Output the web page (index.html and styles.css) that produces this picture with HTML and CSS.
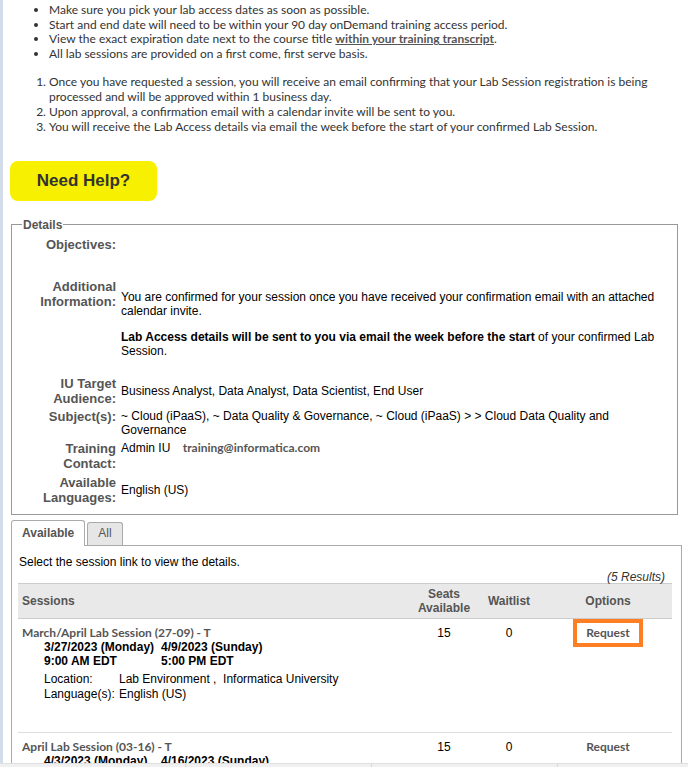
FILE: index.html
```html
<!DOCTYPE html>
<html lang="en">
<head>
  <meta charset="UTF-8">
  <title>Lab Session Registration</title>
  <link rel="stylesheet" href="styles.css">
</head>
<body>
<div class="page">

  <ul class="notes">
    <li>Make sure you pick your lab access dates as soon as possible.</li>
    <li>Start and end date will need to be within your 90 day onDemand training access period.</li>
    <li>View the exact expiration date next to the course title <a href="#" class="transcript">within your training transcript</a>.</li>
    <li>All lab sessions are provided on a first come, first serve basis.</li>
  </ul>

  <ol class="notes steps">
    <li>Once you have requested a session, you will receive an email confirming that your Lab Session registration is being processed and will be approved within 1 business day.</li>
    <li>Upon approval, a confirmation email with a calendar invite will be sent to you.</li>
    <li>You will receive the Lab Access details via email the week before the start of your confirmed Lab Session.</li>
  </ol>

  <a href="#" class="help-btn">Need Help?</a>

  <fieldset class="details">
    <legend>Details</legend>
    <div class="detail-grid">
      <div class="lbl row-obj">Objectives:</div>
      <div class="val row-obj"></div>

      <div class="lbl row-info">Additional Information:</div>
      <div class="val row-info">
        <p>You are confirmed for your session once you have received your confirmation email with an attached calendar invite.</p>
        <p><b>Lab Access details will be sent to you via email the week before the start</b> of your confirmed Lab Session.</p>
      </div>

      <div class="lbl row-aud">IU Target Audience:</div>
      <div class="val row-aud mid">Business Analyst, Data Analyst, Data Scientist, End User</div>

      <div class="lbl row-subj">Subject(s):</div>
      <div class="val row-subj">~ Cloud (iPaaS), ~ Data Quality &amp; Governance, ~ Cloud (iPaaS) &gt; &gt; Cloud Data Quality and Governance</div>

      <div class="lbl row-contact">Training Contact:</div>
      <div class="val row-contact">Admin IU <span class="mail">training@informatica.com</span></div>

      <div class="lbl row-lang">Available Languages:</div>
      <div class="val row-lang mid">English (US)</div>
    </div>
  </fieldset>

  <div class="tabs">
    <span class="tab active">Available</span>
    <span class="tab">All</span>
  </div>

  <div class="tab-panel">
    <p class="hint">Select the session link to view the details.</p>
    <div class="results">(5 Results)</div>

    <table class="sessions">
      <thead>
        <tr>
          <th class="col-name">Sessions</th>
          <th class="col-seats">Seats Available</th>
          <th class="col-wait">Waitlist</th>
          <th class="col-opt">Options</th>
        </tr>
      </thead>
      <tbody>
        <tr>
          <td class="col-name">
            <a href="#" class="session-title">March/April Lab Session (27-09) - T</a>
            <div class="dates">
              <span>3/27/2023 (Monday)</span><span>4/9/2023 (Sunday)</span>
              <span>9:00 AM EDT</span><span>5:00 PM EDT</span>
            </div>
            <div class="meta">
              <span>Location:</span><span>Lab Environment ,&nbsp; Informatica University</span>
              <span>Language(s):</span><span>English (US)</span>
            </div>
          </td>
          <td class="col-seats">15</td>
          <td class="col-wait">0</td>
          <td class="col-opt"><a href="#" class="request marked">Request</a></td>
        </tr>
        <tr>
          <td class="col-name">
            <a href="#" class="session-title">April Lab Session (03-16) - T</a>
            <div class="dates">
              <span>4/3/2023 (Monday)</span><span>4/16/2023 (Sunday)</span>
              <span>9:00 AM EDT</span><span>5:00 PM EDT</span>
            </div>
          </td>
          <td class="col-seats">15</td>
          <td class="col-wait">0</td>
          <td class="col-opt"><a href="#" class="request">Request</a></td>
        </tr>
      </tbody>
    </table>
  </div>

</div>

<div class="status-bar">
  <span></span><span></span><span></span>
</div>
</body>
</html>
```

FILE: styles.css
```css
body {
  margin: 0;
  font-family: Arial, "Liberation Sans", sans-serif;
  font-size: 12px;
  color: #000;
  background: #fff;
}

.page {
  border-left: 3px solid #d3dcea;
  padding: 3px 6px 40px 7px;
  min-height: 767px;
  box-sizing: border-box;
}

a {
  text-decoration: none;
}

/* intro notes */
.notes {
  font-family: Lato, "Open Sans", sans-serif;
  font-size: 12px;
  line-height: 14.7px;
  color: #333;
  margin: 0;
  padding-left: 39px;
}

.steps {
  margin-top: 12px;
  line-height: 15px;
}

.transcript {
  color: #555;
  font-weight: bold;
  text-decoration: underline;
}

.help-btn {
  display: flex;
  align-items: center;
  justify-content: center;
  width: 147px;
  height: 40px;
  margin-top: 27px;
  background: #f7f000;
  border-radius: 8px;
  color: #333;
  font-weight: bold;
  font-size: 17px;
}

/* details box */
.details {
  margin: 17px 4px 0 1px;
  padding: 0 12px 9px 0;
  border: 1px solid #999;
}

.details legend {
  margin-left: 10px;
  padding: 0 1px;
  font-weight: bold;
  font-size: 12px;
  color: #555;
}

.detail-grid {
  display: grid;
  grid-template-columns: 104px 1fr;
  column-gap: 5px;
  align-items: start;
}

.lbl {
  text-align: right;
  font-weight: bold;
  font-size: 13px;
  line-height: 15px;
  color: #555;
}

.val {
  line-height: 14px;
}

.val p {
  margin: 0 0 12px;
}

.val p:last-child {
  margin-bottom: 0;
}

.mid {
  align-self: center;
}

.row-obj { margin-top: 5px; min-height: 38px; }
.lbl.row-info { margin-top: 4px; }
.val.row-info { margin-top: 15px; }
.row-aud { margin-top: 18px; }
.row-subj { margin-top: 3px; }
.row-contact { margin-top: 4px; }
.row-lang { margin-top: 4px; }

.mail {
  font-family: Lato, "Open Sans", sans-serif;
  font-weight: bold;
  color: #555;
  margin-left: 9px;
}

/* tabs */
.tabs {
  display: flex;
  align-items: flex-end;
  gap: 2px;
  margin: 6px 0 0 1px;
  height: 24px;
}

.tab {
  border: 1px solid #aaa;
  border-bottom: none;
  border-radius: 3px 3px 0 0;
  padding: 0 10px;
  height: 22px;
  line-height: 21px;
  font-size: 12px;
  color: #555;
  background: #e6e6e6;
}

.tab.active {
  height: 25px;
  line-height: 24px;
  background: #fff;
  font-weight: bold;
  margin-bottom: -1px;
  position: relative;
}

.tab-panel {
  border: 1px solid #aaa;
  border-bottom: none;
  margin-left: 1px;
  padding: 9px 9px 0 6px;
}

.hint {
  margin: 0 0 0 1px;
  line-height: 14px;
}

.results {
  text-align: right;
  font-style: italic;
  color: #333;
  padding-right: 7px;
  margin-top: 1px;
  line-height: 14px;
}

/* sessions table */
.sessions {
  width: 100%;
  border-collapse: collapse;
  margin-top: -1px;
}

.sessions th {
  background: #e9e9e9;
  border-top: 1px solid #ccc;
  border-bottom: 1px solid #ccc;
  color: #555;
  font-size: 12px;
  line-height: 14px;
  height: 34px;
  padding: 0;
}

.sessions th.col-name {
  text-align: left;
  padding-left: 4px;
}

.col-seats { width: 60px; text-align: center; }
.col-wait { width: 70px; text-align: center; }
.col-opt { width: 128px; text-align: center; }

.sessions td {
  vertical-align: top;
  padding: 7px 0 0;
  line-height: 14px;
  border-bottom: 1px solid #ddd;
}

.sessions tbody tr:first-child td {
  height: 106px;
}

.sessions td.col-name {
  padding-left: 4px;
}

.session-title,
.request {
  font-family: Lato, "Open Sans", sans-serif;
  font-weight: bold;
  color: #555;
}

.request {
  display: inline-block;
}

.request.marked {
  outline: 4px solid #fd7e23;
  padding: 3px 9px;
  margin-top: -3px;
}

.dates,
.meta {
  display: grid;
  margin-left: 22px;
}

.dates {
  grid-template-columns: 117px auto;
  font-weight: bold;
}

.meta {
  grid-template-columns: 75px auto;
  margin-top: 4px;
  line-height: 15px;
}

.status-bar {
  position: fixed;
  left: 0;
  right: 0;
  bottom: 0;
  height: 3px;
  display: flex;
  background: #f0f0f0;
  border-top: 1px solid #e0e0e0;
}

.status-bar span {
  width: 185px;
  border-right: 1px solid #d8d8d8;
}
```
